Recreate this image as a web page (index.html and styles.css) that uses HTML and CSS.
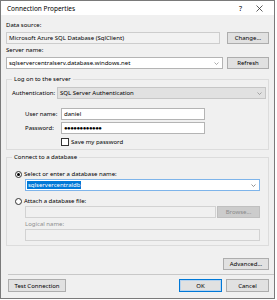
FILE: index.html
```html
<!DOCTYPE html>
<html lang="en">
<head>
    <meta charset="UTF-8">
    <title>Connection Properties</title>
    <link rel="stylesheet" href="styles.css">
</head>
<body>
    <div class="dialog">
        <div class="titlebar">
            <span class="title">Connection Properties</span>
            <span class="help">?</span>
            <svg class="close" width="7" height="7" viewBox="0 0 7 7">
                <path d="M0.5 0.5 L6.5 6.5 M6.5 0.5 L0.5 6.5" stroke="#333" stroke-width="0.8" fill="none"/>
            </svg>
        </div>

        <div class="content">
            <div class="label">Data source:</div>
            <div class="row">
                <div class="textbox readonly source">Microsoft Azure SQL Database (SqlClient)</div>
                <button class="btn side">Change...</button>
            </div>

            <div class="label">Server name:</div>
            <div class="row">
                <div class="textbox combo server">
                    <span>sqlservercentralserv.database.windows.net</span>
                    <svg class="chev" width="5" height="3" viewBox="0 0 5 3"><path d="M0.5 0.5 L2.5 2.5 L4.5 0.5" stroke="#888" stroke-width="0.7" fill="none"/></svg>
                </div>
                <button class="btn side">Refresh</button>
            </div>

            <fieldset class="group logon">
                <legend>Log on to the server</legend>
                <div class="auth-row">
                    <span class="auth-label">Authentication:</span>
                    <div class="textbox combo disabled-combo">
                        <span>SQL Server Authentication</span>
                        <svg class="chev" width="5" height="3" viewBox="0 0 5 3"><path d="M0.5 0.5 L2.5 2.5 L4.5 0.5" stroke="#888" stroke-width="0.7" fill="none"/></svg>
                    </div>
                </div>
                <div class="cred-row first">
                    <span class="cred-label">User name:</span>
                    <div class="textbox cred">daniel</div>
                </div>
                <div class="cred-row">
                    <span class="cred-label">Password:</span>
                    <div class="textbox cred dots">●●●●●●●●●●●●</div>
                </div>
                <label class="check-row">
                    <span class="checkbox"></span>
                    <span>Save my password</span>
                </label>
            </fieldset>

            <fieldset class="group database">
                <legend>Connect to a database</legend>
                <div class="radio-row first">
                    <span class="radio checked"></span>
                    <span>Select or enter a database name:</span>
                </div>
                <div class="textbox combo dbname">
                    <span class="selected">sqlservercentraldb</span>
                    <svg class="chev" width="5" height="3" viewBox="0 0 5 3"><path d="M0.5 0.5 L2.5 2.5 L4.5 0.5" stroke="#666" stroke-width="0.7" fill="none"/></svg>
                </div>
                <div class="radio-row second">
                    <span class="radio"></span>
                    <span>Attach a database file:</span>
                </div>
                <div class="file-row">
                    <div class="textbox disabled file"></div>
                    <button class="btn browse" disabled>Browse...</button>
                </div>
                <div class="sub-label">Logical name:</div>
                <div class="textbox disabled logical"></div>
            </fieldset>

            <div class="advanced-row">
                <button class="btn advanced">Advanced...</button>
            </div>

            <div class="separator"></div>

            <div class="footer">
                <button class="btn test">Test Connection</button>
                <div class="footer-right">
                    <button class="btn ok">OK</button>
                    <button class="btn cancel">Cancel</button>
                </div>
            </div>
        </div>
    </div>
</body>
</html>
```

FILE: styles.css
```css
body {
    margin: 0;
    background-color: #ffffff;
    font-family: "Noto Sans", sans-serif;
    font-size: 6px;
    color: #000;
}
.dialog {
    width: 273px;
    height: 297px;
    border: 1px solid #7a7a7a;
    background-color: #f0f0f0;
    display: flex;
    flex-direction: column;
}
.titlebar {
    height: 14px;
    background-color: #ffffff;
    display: flex;
    align-items: center;
    padding: 0 11px 0 6px;
    font-size: 6.5px;
}
.title {
    flex: 1;
}
.help {
    margin-right: 14px;
    font-size: 7px;
}
.content {
    padding: 0 5px;
}
.label {
    margin-top: 6px;
    line-height: 8px;
    height: 8px;
}
.label + .row {
    margin-top: 3px;
}
.row + .label {
    margin-top: 2px;
}
.row {
    display: flex;
    justify-content: space-between;
}
.textbox {
    box-sizing: border-box;
    height: 12px;
    border: 1px solid #b4b4b4;
    background-color: #fff;
    line-height: 10px;
    padding: 0 2px;
    white-space: nowrap;
    overflow: hidden;
}
.readonly {
    background-color: #f2f2f2;
    border-color: #cdcdcd;
}
.source {
    width: 214px;
}
.server {
    width: 217px;
}
.combo {
    display: flex;
    align-items: center;
    justify-content: space-between;
}
.chev {
    flex: none;
    margin-right: 1px;
}
.btn {
    box-sizing: border-box;
    height: 12px;
    padding: 0;
    border: 1px solid #adadad;
    background-color: #e1e1e1;
    font-family: "Noto Sans", sans-serif;
    font-size: 6px;
    color: #000;
    line-height: 10px;
}
.side {
    width: 42px;
}
.group {
    margin: 6px 0 0;
    padding: 0 2px 3px 5px;
    border: 1px solid #dcdcdc;
    min-width: 0;
}
.group legend {
    padding: 0 2px;
    line-height: 8px;
    height: 8px;
}
.auth-row {
    display: flex;
    align-items: center;
    margin-top: 4px;
}
.auth-label {
    width: 45px;
}
.disabled-combo {
    flex: 1;
    background-color: #e1e1e1;
    border-color: #c6c6c6;
    height: 12px;
}
.cred-row {
    display: flex;
    align-items: center;
    margin-top: 2px;
    margin-left: 13px;
}
.cred-row.first {
    margin-top: 9px;
}
.cred-label {
    width: 36px;
}
.cred {
    width: 144px;
}
.dots {
    font-size: 6px;
    letter-spacing: -0.5px;
    line-height: 10px;
}
.check-row {
    display: flex;
    align-items: center;
    margin: 4px 0 0 49px;
    line-height: 8px;
}
.checkbox {
    width: 6px;
    height: 6px;
    border: 1px solid #333;
    background-color: #fff;
    margin-right: 2px;
}
.database {
    margin-top: 3px;
    padding-bottom: 4px;
}
.radio-row {
    display: flex;
    align-items: center;
    line-height: 8px;
    margin-left: 3px;
}
.radio-row.first {
    margin-top: 9px;
}
.radio-row.second {
    margin-top: 6px;
}
.radio {
    box-sizing: border-box;
    width: 7px;
    height: 7px;
    border: 1px solid #333;
    border-radius: 50%;
    background-color: #fff;
    margin-right: 2px;
    display: flex;
    align-items: center;
    justify-content: center;
}
.radio.checked::after {
    content: "";
    width: 3px;
    height: 3px;
    border-radius: 50%;
    background-color: #000;
}
.dbname {
    margin: 1px 6px 0 13px;
    border-color: #7eb4ea;
    padding-left: 1px;
}
.selected {
    background-color: #0078d7;
    color: #fff;
    line-height: 8px;
    padding: 0 1px;
}
.file-row {
    display: flex;
    justify-content: space-between;
    margin: 1px 6px 0 13px;
}
.disabled {
    background-color: #f0f0f0;
    border-color: #d2d2d2;
}
.file {
    width: 191px;
}
.browse {
    width: 43px;
    background-color: #cccccc;
    border-color: #bfbfbf;
    color: #8a8a8a;
}
.sub-label {
    margin: 2px 0 0 13px;
    line-height: 8px;
    color: #8d8d8d;
}
.logical {
    margin: 1px 6px 0 13px;
}
.advanced-row {
    display: flex;
    justify-content: flex-end;
    margin-top: 12px;
}
.advanced {
    width: 46px;
}
.separator {
    height: 1px;
    background-color: #c8c8c8;
    margin: 4px -5px 0 2px;
}
.footer {
    display: flex;
    justify-content: space-between;
    margin-top: 4px;
    padding-left: 2px;
}
.footer .btn {
    height: 13px;
}
.test {
    width: 58px;
}
.footer-right {
    display: flex;
    gap: 4px;
}
.ok,
.cancel {
    width: 43px;
}
.ok {
    border-color: #0078d7;
    box-shadow: inset 0 0 0 1px #b5d3ef;
}
```
